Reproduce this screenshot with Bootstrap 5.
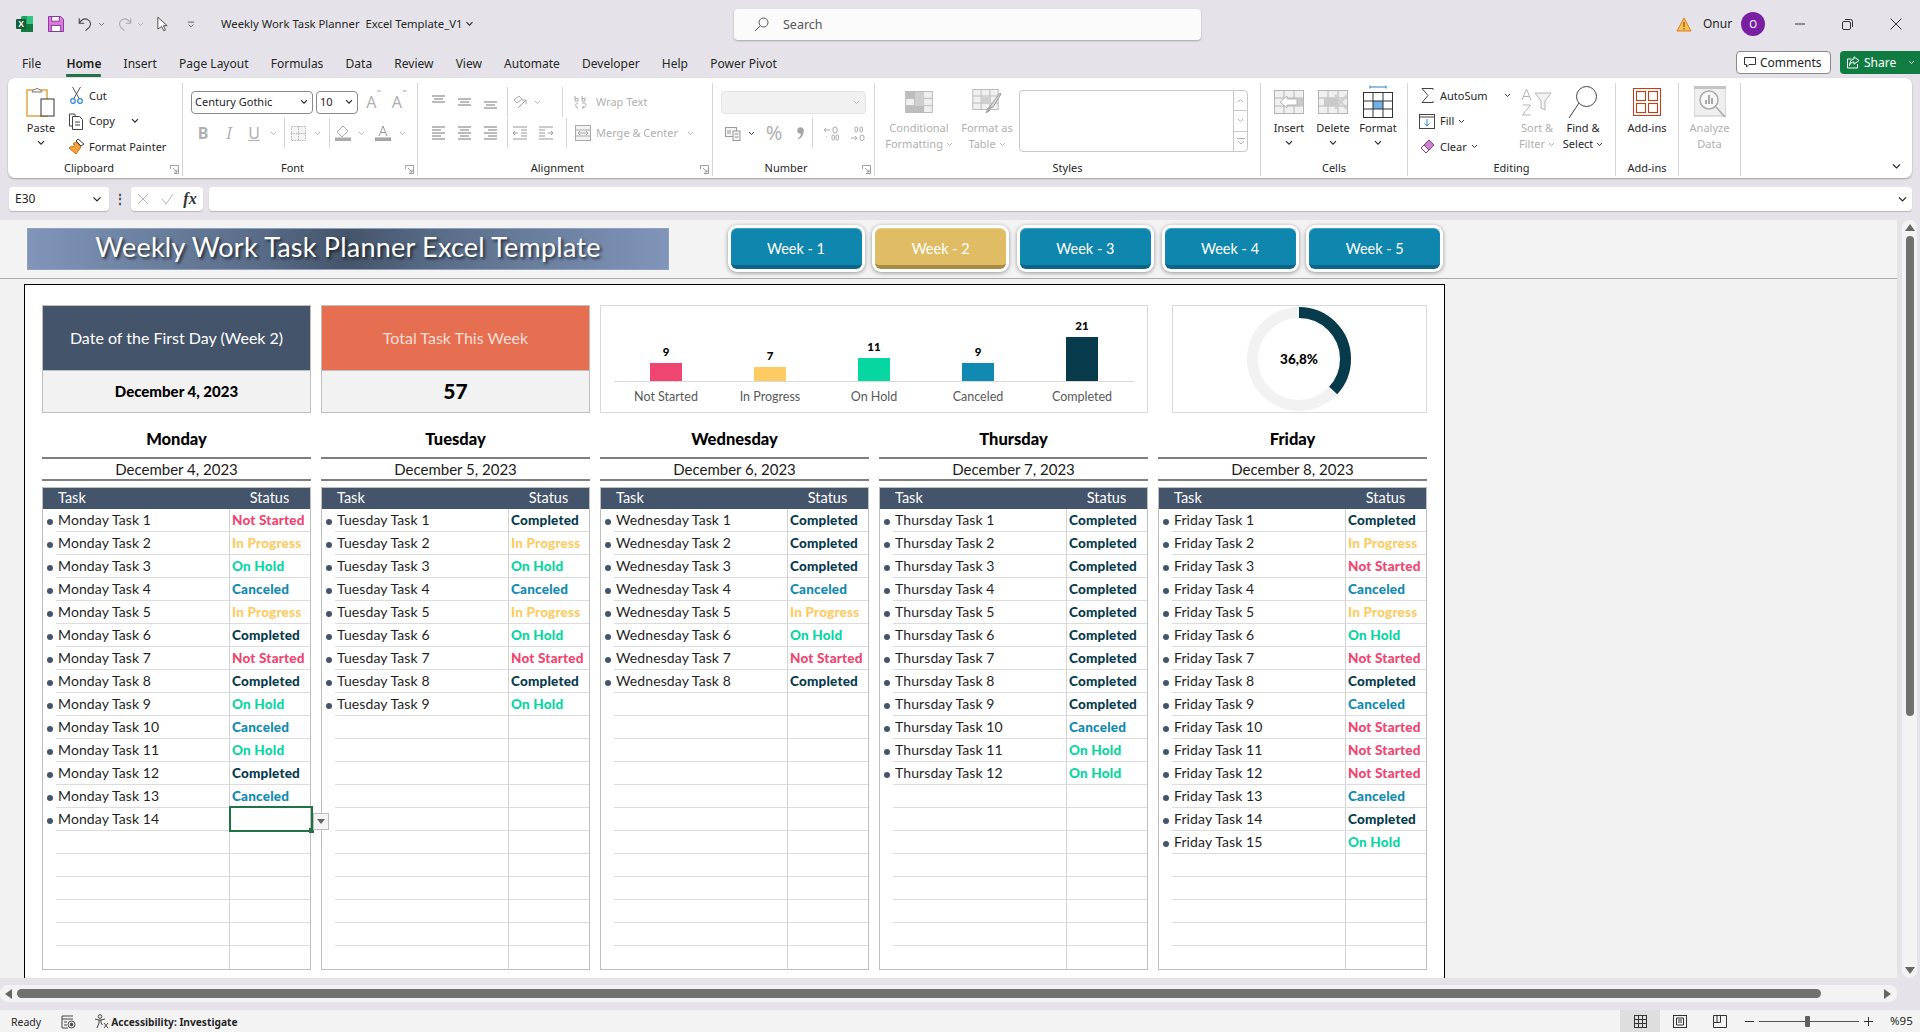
<!DOCTYPE html>
<html lang="en">
<head>
<meta charset="utf-8">
<title>Weekly Work Task Planner Excel Template</title>
<link href="https://cdn.jsdelivr.net/npm/bootstrap@5.3.0/dist/css/bootstrap.min.css" rel="stylesheet">
<style>
:root{--win:#e5e3e9;--ui:"Noto Sans","Open Sans",sans-serif;--cg:Lato,"Open Sans",sans-serif;--navy:#44546a;--ns:#ef4570;--ip:#fdcb62;--oh:#06d6a0;--ca:#118ab2;--co:#073b4c}
html,body{height:1032px;overflow:hidden}
body{background:var(--win);font-family:var(--ui);font-size:12px;color:#262626;line-height:16px}
svg{display:block;flex:none}
.appw{height:1032px;display:flex;flex-direction:column}
/* title bar */
.ttl{height:48px;flex:none;display:flex;align-items:center;position:relative}
.c{display:flex;align-items:center;justify-content:center;flex:none}
.m7{margin-left:7px}.m9{margin-left:9px}.m11{margin-left:11px}.m15{margin-left:15px}.m16{margin-left:16px}
.doc{margin-left:23px;font-size:11.3px;white-space:pre}
.srch{position:absolute;left:734px;top:9px;width:467px;height:31px;background:#fbfbfb;border-radius:4px;box-shadow:0 1px 2px rgba(0,0,0,.28);display:flex;align-items:center;padding-left:20px;gap:14px;color:#555;font-size:12.5px}
.onur{margin-left:11px}
.avt{width:24px;height:24px;border-radius:50%;background:#7a1fa2;color:#fff;font-size:10px;margin-left:9px}
.warnw{left:1676px}.ctrlw{left:1795px;gap:37px}
/* tabs */
.tabs{height:30px;flex:none;display:flex;align-items:center;padding:1px 0 0 22px;gap:22.2px;position:relative;font-size:12px}
.tabs>span{position:relative;white-space:nowrap}
.tabs .on{font-weight:600;color:#1d1d1d;margin-left:3px}
.tabs .on::after{content:"";position:absolute;left:0;right:0;top:18px;height:3px;background:#217346;border-radius:1px}
.acts{position:absolute;left:1736px;top:3px;display:flex;gap:9px}
.cmt,.shr{height:23px;border-radius:4px;display:flex;align-items:center;gap:4px}
.cmt{width:95px;background:#fff;border:1px solid #8a8a8a;padding-left:7px}
.shr{width:80px;background:#107c41;color:#fff;padding-left:7px;border-radius:4px 0 0 4px}
/* ribbon */
.ribn{height:100px;flex:none;margin:0 8px;background:#fff;border-radius:7px;box-shadow:0 1px 2px rgba(0,0,0,.3);display:flex;padding:5px 0 2px;position:relative;font-size:11px}
.grp{flex:none;height:93px;display:flex;flex-direction:column;border-right:1px solid #d5d5d5;position:relative}
.top{height:77px;flex:none;display:flex}
.lbl{height:16px;text-align:center;position:relative}
.g1{width:175px}.g2{width:235px}.g3{width:295px}.g4{width:162px}.g5{width:386px}.g6{width:147px}.g7{width:208px}.g8{width:63px}.g9{width:62px}
.g1 .lbl{padding-right:12px}.g2 .lbl,.g3 .lbl,.g4 .lbl{padding-right:15px}
.g1 .top{padding-left:7px}.g2 .top,.g3 .top,.g4 .top{padding-left:8px}
.g5 .top{padding-left:9px}.g6 .top{padding-left:6px}.g7 .top{padding-left:10px}
.lch{position:absolute;right:3px;top:5px;width:9px;height:9px}
.stk{display:flex;flex-direction:column}
.two{padding-top:8px;gap:9px}
.rw{display:flex;align-items:center;height:22px;flex:none}
.rw.tri-r{height:25.5px}
.big{display:flex;flex-direction:column;align-items:center;flex:none;text-align:center}
.big .pic{height:37px;display:flex;align-items:center;justify-content:center}
.cap svg{display:inline;vertical-align:1px}
.dim{color:#b0b0b0}
.vs{width:1px;height:30px;background:#d5d5d5;margin:0 3px;flex:none;align-self:center}
.w10{width:10px}.w12{width:12px}.w14{width:14px}.w16{width:16px}.w18{width:18px}.w20{width:20px}.w22{width:22px}.w24{width:24px}.w26{width:26px}.w27{width:27px}.w28{width:28px}.w30{width:30px}.w34{width:34px}
.b52{width:52px}.b70{width:70px}.b66{width:66px}.b44{width:44px}.b46{width:46px}.b40{width:40px}.b63{width:62px}.b61{width:61px}
.fsel{height:23px;border:1px solid #8a8a8a;border-radius:4px;display:flex;align-items:center;justify-content:space-between;padding:0 4px 0 3px;font-size:11px}
.fn{width:122px;margin-right:3px}.fz{width:42px}
.nsel{width:145px;height:23px;background:#f1f1f1;border:1px solid #e3e3e3;border-radius:4px;display:flex;align-items:center;justify-content:flex-end;padding-right:5px}
.glry{width:229px;height:62px;margin:7px 0 0 -1px;border:1px solid #c8c8c8;border-radius:4px;display:flex;justify-content:flex-end}
.gsc{width:14px;border-left:1px solid #c8c8c8;display:flex;flex-direction:column}
.gsc span{flex:1;display:flex;align-items:center;justify-content:center;border-bottom:1px solid #c8c8c8;color:#b0b0b0}
.gsc span:last-child{border:0}
.lc99{width:99px}
.clp{position:absolute;right:10px;bottom:8px}
.rotate180{transform:rotate(180deg)}
/* formula bar */
.fbar{height:24px;flex:none;margin:9px 8px 9px 9px;display:flex}
.fld{background:#fff;border-radius:4px;box-shadow:0 1px 1px rgba(0,0,0,.2);height:24px;display:flex;align-items:center}
.nmb{width:100px;justify-content:space-between;padding:0 7px 0 6px}
.dts{width:22px;justify-content:center;font-weight:700;color:#444}
.fxb{width:72px;color:#b5b5b5}
.fxb i{font-family:"Liberation Serif",serif;font-size:16px;color:#333;font-weight:700}
.inp{flex:1;margin-left:6px;justify-content:flex-end;padding-right:4px}
/* sheet */
.mn{flex:1;display:flex;min-height:0}
.sht{width:1897px;background:#f2f2f2;overflow:hidden;display:flex;flex-direction:column}
.band{height:59px;flex:none;border-bottom:1px solid #a9a9a9;display:flex;padding:8px 0 0 27px;background:#f3f3f3}
.bnr{width:642px;height:42px;background:linear-gradient(90deg,#8095b9,#5a6e8a 35%,#44546a 50%,#5a6e8a 65%,#8095b9);border:1px solid #8fa0bb;color:#fff;font-family:var(--cg);font-size:27px;letter-spacing:.22px;text-align:center;line-height:36px;text-shadow:2px 2px 3px rgba(0,0,0,.65)}
.wks{display:flex;gap:7.7px;margin:-3px 0 0 58.5px}
.wkb{width:137px;height:47px;background:#fff;border-radius:9px;padding:3px;box-shadow:0 1px 4px rgba(0,0,0,.4)}
.wkb span{display:block;height:41px;border-radius:6px;background:#0e86ae;border-bottom:4px solid #0a6587;color:#fff;font-family:var(--cg);font-size:14.5px;text-align:center;line-height:41px;box-shadow:inset 0 1px 1px rgba(255,255,255,.25)}
.wkb.act span{background:#e0bd64;border-bottom-color:#a98c43}
.pg{width:1421px;margin:5px 0 0 24px;background:#fff;border:1.5px solid #000;border-bottom:0;padding:19.5px 0 0 17px;flex:1;font-family:var(--cg)}
.gd{display:grid;grid-template-columns:repeat(5,269px);column-gap:10px}
.kpi{height:108px;border:1px solid #bfbfbf;display:flex;flex-direction:column;text-align:center}
.kh{height:65px;flex:none;color:#fff;font-size:16px;display:flex;align-items:center;justify-content:center;background:var(--navy);border-bottom:1px solid #bfbfbf}
.kh.org{background:#e76f51;color:#f9ded6}
.kb{flex:1;background:#f2f2f2;display:flex;align-items:center;justify-content:center;font-weight:900;font-size:15px;color:#000}
.kb.lg{font-size:21px}
.chrt{grid-column:3/5;height:108px;border:1px solid #d9d9d9;padding:0 13px}
.plot{height:76px;display:flex;align-items:flex-end;border-bottom:1px solid #d9d9d9}
.bcol{flex:1;display:flex;flex-direction:column;align-items:center}
.bcol b{font-size:11.5px;line-height:14px;margin-bottom:4px;color:#000;font-weight:900}
.bcol i{display:block;width:32px}
.bg-ns{background:var(--ns)}.bg-ip{background:var(--ip)}.bg-oh{background:var(--oh)}.bg-ca{background:var(--ca)}.bg-co{background:var(--co)}
.cats{display:flex;color:#595959;font-size:12.5px;line-height:30px}
.cats span{flex:1;text-align:center}
.dnt{height:108px;margin-left:14px;border:1px solid #d9d9d9;display:flex;align-items:center;justify-content:center}
.dnt svg{margin-left:-1px}
.dnt text{font-family:var(--cg);font-weight:900;font-size:13.5px}
.dy{text-align:center;font-weight:900;font-size:16.5px;color:#000;height:44px;line-height:52px}
.dt{border-top:2px solid #7f7f7f;border-bottom:2px solid #7f7f7f;height:24px;line-height:20px;text-align:center;font-size:15px;color:#1b1b1b}
.tsk{width:269px;margin-top:6px;border:1px solid #bfbfbf;border-collapse:separate;border-spacing:0;table-layout:fixed;font-size:14px}
.c1{width:13px}.c2{width:173px}.c3{width:81px}
.tsk th{height:21px;background:var(--navy);color:#fff;font-weight:400;font-size:14.5px;padding:0}
.tsk th:first-child{padding-left:15px}
.tsk th:last-child{text-align:center}
.tsk td{height:23px;padding:0 0 0 2px;border-bottom:1px solid #dcdcdc;color:#1f1f1f;white-space:nowrap;line-height:18px;letter-spacing:.1px}
.tsk td:first-child{border-bottom:0;padding:0;position:relative}
.tsk td:last-child{border-left:1px solid #d4d4d4;padding-left:2px;font-weight:900;letter-spacing:.2px;font-size:13.5px}
.tsk tr:last-child td{border-bottom:0}
.f td:first-child::before{content:"";position:absolute;left:4px;top:10px;width:6px;height:6px;border-radius:50%;background:var(--navy)}
.ns{color:var(--ns)!important}.ip{color:var(--ip)!important}.oh{color:var(--oh)!important}.ca{color:var(--ca)!important}.co{color:var(--co)!important}
.sel{position:relative}
.selb{position:absolute;left:-1px;top:-2px;width:84px;height:26px;border:2px solid #217346;pointer-events:none}
.selh{position:absolute;right:-3px;bottom:-3px;width:5px;height:5px;background:#217346;border:0}
.ddb{position:absolute;left:83px;top:5px;width:16px;height:17px;background:#f4f4f4;border:1px solid #bdbdbd;display:flex;align-items:center;justify-content:center}
.vsb{width:15px;margin-left:5px;background:#f3f3f3;border-radius:8px;display:flex;flex-direction:column;align-items:center;padding-top:4px;height:758px}
.vth{width:8px;height:480px;margin-top:5px;background:#707070;border-radius:4px}
.hsb{height:32px;flex:none;padding-top:7px}
.htr{width:1897px;height:17px;background:#f3f3f3;border-radius:8px;display:flex;align-items:center;padding:0 6px 0 5px}
.hth{width:1804px;height:9px;margin-left:5px;background:#707070;border-radius:5px}
.stb{height:22px;flex:none;background:#f4f3f4;display:flex;align-items:center;padding:1px 0 0 11px;font-size:10.5px;position:relative}
.stb b{font-weight:700;font-size:10.2px;margin-left:2px}
.vws{position:absolute;left:1620px;top:0;height:22px;display:flex;align-items:center}
.vws span{width:40px;height:22px;display:flex;align-items:center;justify-content:center}
.vws .hi{background:#dedede}
.zm{width:100px;height:1px;background:#555;position:relative;margin:0 3px}
.zm::after{content:"";position:absolute;left:46px;top:-5px;width:5px;height:11px;background:#5f5f5f;border-radius:1px}
.zw{position:absolute;left:1745px;top:0;height:22px;display:flex;align-items:center;gap:2px;font-size:11.5px}
.zw em{font-style:normal;margin-left:15px}
.m20{margin-left:20px}.m18{margin-left:18px}
</style>
</head>
<body>
<svg width="0" height="0" class="position-absolute">
<symbol id="chev" viewBox="0 0 8 6"><path d="M1 1.200l3 3 3-3" fill="none" stroke="currentColor" stroke-width="1.100"/></symbol>
<symbol id="at" viewBox="0 0 16 16"><path d="M1 2h13M3 5h9M1 8h13" fill="none" stroke="#777"/></symbol>
<symbol id="am" viewBox="0 0 16 16"><path d="M1 5h13M3 8h9M1 11h13" fill="none" stroke="#777"/></symbol>
<symbol id="ab" viewBox="0 0 16 16"><path d="M1 8h13M3 11h9M1 14h13" fill="none" stroke="#777"/></symbol>
<symbol id="al" viewBox="0 0 16 16"><path d="M1 2h13M1 5h9M1 8h13M1 11h9M1 14h13" fill="none" stroke="#777"/></symbol>
<symbol id="ac" viewBox="0 0 16 16"><path d="M1 2h13M3 5h9M1 8h13M3 11h9M1 14h13" fill="none" stroke="#777"/></symbol>
<symbol id="ar" viewBox="0 0 16 16"><path d="M1 2h13M5 5h9M1 8h13M5 11h9M1 14h13" fill="none" stroke="#777"/></symbol>
<symbol id="lnch" viewBox="0 0 9 9"><path d="M.5 4V.5h8v8H4M3 3l4 4M7 4.500V7H4.500" fill="none" stroke="#888" stroke-width=".8"/></symbol>
<symbol id="gr" viewBox="0 0 30 24"><rect x=".5" y=".5" width="29" height="23" fill="#f0f0f0" stroke="#b5b5b5"/><path d="M10 .5v23M20 .5v23M.5 8h29M.5 16h29" stroke="#b5b5b5" fill="none"/></symbol>
</svg>
<div class="appw">

<header class="ttl">
  <span class="c w16 m16"><svg width="17" height="18" viewBox="0 0 17 18"><rect x="5" y="1" width="12" height="16" rx="1.500" fill="#21a366"/><rect x="11" y="1" width="6" height="8" fill="#33c481"/><rect x="5" y="9" width="12" height="8" fill="#107c41"/><rect y="4" width="10" height="10" rx="1" fill="#185c37"/><text x="5" y="12" font-size="8.500" font-weight="700" fill="#fff" text-anchor="middle" font-family="Liberation Sans">X</text></svg></span>
  <span class="c w16 m16"><svg width="16" height="16" viewBox="0 0 17 17"><path d="M.5.5h13l3 3v13H.5z" fill="#d87dd9" stroke="#8b2e99"/><rect x="4" y=".5" width="8" height="5" fill="#fff" stroke="#8b2e99"/><rect x="3.500" y="10" width="10" height="6.500" fill="#fff" stroke="#8b2e99"/></svg></span>
  <span class="c w20 m11"><svg width="15" height="16" viewBox="0 0 18 18" fill="none" stroke="#444" stroke-width="1.300"><path d="M1.500 2v6h6"/><path d="M1.500 8C4 4 8 2 11.500 3.500c4 2 4.500 6.500 2 9.500L9 17"/></svg></span>
  <span class="c w12 text-secondary"><svg width="7" height="5"><use href="#chev"/></svg></span>
  <span class="c w20 m7"><svg width="15" height="16" viewBox="0 0 18 18" fill="none" stroke="#aaa" stroke-width="1.300"><path d="M16.500 2v6h-6"/><path d="M16.500 8C14 4 10 2 6.500 3.500c-4 2-4.500 6.500-2 9.500L9 17"/></svg></span>
  <span class="c w12 dim"><svg width="7" height="5"><use href="#chev"/></svg></span>
  <span class="c w14 m9"><svg width="11" height="16" viewBox="0 0 13 18"><path d="M1 1l11 10H7.500l2.500 5-2 1-2.500-5L1 15z" fill="#fff" stroke="#333"/></svg></span>
  <span class="c w14 m15"><svg width="8" height="7" viewBox="0 0 10 8" fill="none" stroke="#444"><path d="M1 1h8M2 4l3 3 3-3"/></svg></span>
  <span class="doc">Weekly Work Task Planner  Excel Template_V1</span>
  <span class="c w14"><svg width="9" height="6"><use href="#chev"/></svg></span>
  <div class="srch"><svg width="15" height="15" viewBox="0 0 15 15" fill="none" stroke="#555"><circle cx="9.500" cy="5.500" r="4.500"/><path d="M6 9l-5 5"/></svg>Search</div>
  <div class="position-absolute d-flex align-items-center top-0 h-100 warnw">
    <svg width="16" height="15" viewBox="0 0 16 15"><path d="M8 1l7 13H1z" fill="#f8c24e" stroke="#d97a2b"/><path d="M8 5v5M8 11v1.500" stroke="#6b3b00"/></svg>
    <span class="onur">Onur</span>
    <span class="c avt">O</span>
  </div>
  <div class="position-absolute d-flex align-items-center top-0 h-100 ctrlw">
    <svg width="10" height="2"><path d="M0 1h10" stroke="#333"/></svg>
    <svg width="11" height="11" viewBox="0 0 11 11" fill="none" stroke="#333"><rect x=".5" y="2.500" width="8" height="8" rx="1.500"/><path d="M3 .5h5.500a2 2 0 0 1 2 2V8"/></svg>
    <svg width="12" height="12" viewBox="0 0 12 12" stroke="#333"><path d="M.5.5l11 11M11.500.5l-11 11"/></svg>
  </div>
</header>

<nav class="tabs">
  <span>File</span><span class="on">Home</span><span>Insert</span><span>Page Layout</span><span>Formulas</span><span>Data</span><span>Review</span><span>View</span><span>Automate</span><span>Developer</span><span>Help</span><span>Power Pivot</span>
  <div class="acts">
    <div class="cmt"><svg width="12" height="11" viewBox="0 0 12 11" fill="none" stroke="#333"><path d="M.5.5h11v7H5l-2.500 2.500V7.500h-2z"/></svg>Comments</div>
    <div class="shr"><svg width="13" height="13" viewBox="0 0 13 13" fill="none" stroke="#fff"><path d="M10.500 8v4h-10V3h4M7 .8l5 3.700-5 3.700V6C4 6 3 8 2.500 9.500 3 6 4 3 7 3z"/></svg>Share<svg class="ms-2" width="7" height="5"><use href="#chev"/></svg></div>
  </div>
</nav>

<section class="ribn">
  <div class="grp g1"><div class="top">
    <div class="big b52"><div class="pic"><svg width="30" height="32" viewBox="0 0 30 32"><rect x="1" y="4" width="20" height="26" fill="#fff" stroke="#e8a33d" stroke-width="1.500"/><path d="M6 6c0-3 4-2 5-4 1 2 5 1 5 4z" fill="#f4f4f4" stroke="#777"/><rect x="15" y="13" width="13" height="17" fill="#fff" stroke="#333"/></svg></div>Paste<svg class="mt-1" width="8" height="6"><use href="#chev"/></svg></div>
    <div class="stk">
      <div class="rw tri-r"><span class="c w18"><svg width="13" height="17" viewBox="0 0 13 17" fill="none"><path d="M2.500 0l7 12M10.500 0l-7 12" stroke="#555"/><circle cx="3" cy="14" r="2.300" stroke="#2b88d8" stroke-width="1.200"/><circle cx="10" cy="14" r="2.300" stroke="#2b88d8" stroke-width="1.200"/></svg></span><span class="ms-1">Cut</span></div>
      <div class="rw tri-r"><span class="c w18"><svg width="15" height="17" viewBox="0 0 15 17" fill="#fff" stroke="#444"><path d="M6 3.500V1H.5v12H3"/><path d="M3.500 3.500h7l3 3v10h-10zM6 9h5M6 12h5"/></svg></span><span class="ms-1">Copy</span><span class="c ms-3"><svg width="8" height="6"><use href="#chev"/></svg></span></div>
      <div class="rw tri-r"><span class="c w18"><svg width="17" height="17" viewBox="0 0 17 17"><path d="M10 1l6 5-3 2-5-5z" fill="#fff" stroke="#444"/><path d="M8 4l5 5-5 7-7-6 3-2 1 1 2-2-2-1z" fill="#f2a33c" stroke="#c8751a"/></svg></span><span class="ms-1 text-nowrap">Format Painter</span></div>
    </div></div><div class="lbl">Clipboard<svg class="lch"><use href="#lnch"/></svg></div></div>

  <div class="grp g2"><div class="top stk two">
    <div class="rw"><div class="fsel fn">Century Gothic<svg width="8" height="6"><use href="#chev"/></svg></div><div class="fsel fz">10<svg width="8" height="6"><use href="#chev"/></svg></div><span class="c w24 ms-1 dim fs-6">A<sup>&#710;</sup></span><span class="c w27 dim fs-6">A<sup>&#711;</sup></span></div>
    <div class="rw dim"><b class="c w24 fs-6">B</b><i class="c w28 fs-6">I</i><u class="c w22 fs-6">U</u><span class="c w16"><svg width="7" height="5"><use href="#chev"/></svg></span><span class="vs"></span><span class="c w20"><svg width="15" height="15" viewBox="0 0 15 15" fill="#f4f4f4" stroke="#b5b5b5" stroke-dasharray="1.500 1"><rect x=".5" y=".5" width="14" height="14"/><path d="M7.500 0v15M0 7.500h15"/></svg></span><span class="c w18"><svg width="7" height="5"><use href="#chev"/></svg></span><span class="vs"></span><span class="c w20"><svg width="16" height="16" viewBox="0 0 16 16" fill="none" stroke="#aaa"><path d="M8 1L2 7l5 5 6-6z"/><rect x="0" y="13" width="16" height="3" fill="#aaa"/></svg></span><span class="c w16"><svg width="7" height="5"><use href="#chev"/></svg></span><span class="c w28"><svg width="16" height="16" viewBox="0 0 16 16" fill="none" stroke="#999"><path d="M4 11L8 1l4 10M5.500 7.500h5"/><rect x="0" y="13" width="16" height="3" fill="#aaa"/></svg></span><span class="c w10"><svg width="7" height="5"><use href="#chev"/></svg></span></div>
    </div><div class="lbl">Font<svg class="lch"><use href="#lnch"/></svg></div></div>

  <div class="grp g3"><div class="top stk two">
    <div class="rw dim"><span class="c w26"><svg width="16" height="16"><use href="#at"/></svg></span><span class="c w26"><svg width="16" height="16"><use href="#am"/></svg></span><span class="c w26"><svg width="16" height="16"><use href="#ab"/></svg></span><span class="vs"></span><span class="c w18"><svg width="16" height="16" viewBox="0 0 16 16" fill="none" stroke="#aaa"><path d="M2 6l5-4 3 3-5 4zM6 14l8-8M10 6h4v4"/></svg></span><span class="c w16"><svg width="7" height="5"><use href="#chev"/></svg></span><span class="w14"></span><span class="vs"></span><span class="c w30"><svg width="14" height="14" viewBox="0 0 14 14" fill="none" stroke="#aaa"><path d="M1 6V1M1 3.500h3v2.500H1M8 1v5h3V3.500H8M4 13c-3 0-3-5 0-5M8 8h3c2 2 0 5-3 5l2-2"/></svg></span>Wrap Text</div>
    <div class="rw dim"><span class="c w26"><svg width="16" height="16"><use href="#al"/></svg></span><span class="c w26"><svg width="16" height="16"><use href="#ac"/></svg></span><span class="c w26"><svg width="16" height="16"><use href="#ar"/></svg></span><span class="vs"></span><span class="c w18"><svg width="16" height="16" viewBox="0 0 16 16" fill="none" stroke="#999"><path d="M1 2h14M9 5h6M9 8h6M9 11h6M1 14h14M6 8H1M3 6L1 8l2 2"/></svg></span><span class="c w34"><svg width="16" height="16" viewBox="0 0 16 16" fill="none" stroke="#999"><path d="M1 2h14M1 5h6M1 8h6M1 11h6M1 14h14M10 8h5M13 6l2 2-2 2"/></svg></span><span class="vs"></span><span class="c w26"><svg width="16" height="16" viewBox="0 0 16 16" fill="#f2f2f2" stroke="#aaa"><rect x=".5" y=".5" width="15" height="15"/><path d="M.5 5h15M.5 11h15M3 8h10M5 6L3 8l2 2M11 6l2 2-2 2"/></svg></span>Merge &amp; Center<span class="c w24"><svg width="7" height="5"><use href="#chev"/></svg></span></div>
    </div><div class="lbl">Alignment<svg class="lch"><use href="#lnch"/></svg></div></div>

  <div class="grp g4"><div class="top stk two">
    <div class="rw"><div class="nsel dim"><svg width="7" height="5"><use href="#chev"/></svg></div></div>
    <div class="rw"><span class="c w24"><svg width="16" height="15" viewBox="0 0 16 15" fill="#f5f5f5" stroke="#999"><rect x=".5" y="1.500" width="11" height="9"/><rect x="8" y="5" width="7" height="9.500"/><path d="M9.500 8h4M9.500 11h4M3 4v4M5 4v4"/></svg></span><span class="c w12"><svg width="7" height="5"><use href="#chev"/></svg></span><span class="c w34 dim fs-5">%</span><span class="c w18"><svg width="7" height="13" viewBox="0 0 7 13"><circle cx="3.500" cy="3.500" r="3.200" fill="#a5a5a5"/><path d="M6.700 3.500C6.700 8 4.500 11 1.500 12.500L1 11.500C3 10 4 8 4 6z" fill="#a5a5a5"/></svg></span><span class="vs"></span><span class="c w30"><svg width="16" height="16" viewBox="0 0 16 16" fill="none" stroke="#aaa"><path d="M1 5h6M3 3L1 5l2 2"/><rect x="10" y="2" width="4" height="6" rx="2"/><rect x="9" y="10" width="2.500" height="5" rx="1.200"/><rect x="13" y="10" width="2.500" height="5" rx="1.200"/><path d="M3 12h1"/></svg></span><span class="c w22"><svg width="16" height="16" viewBox="0 0 16 16" fill="none" stroke="#aaa"><rect x="6" y="2" width="2.500" height="5" rx="1.200"/><rect x="11" y="2" width="2.500" height="5" rx="1.200"/><path d="M2 13h6M6 11l2 2-2 2"/><rect x="11" y="10" width="4" height="5.500" rx="2"/></svg></span></div>
    </div><div class="lbl">Number<svg class="lch"><use href="#lnch"/></svg></div></div>

  <div class="grp g5"><div class="top">
    <div class="big b70 dim"><div class="pic"><svg width="28" height="22" viewBox="0 0 28 22"><use href="#gr" width="28" height="22"/><rect x="1" y="1" width="9" height="7" fill="#bdbdbd"/><rect x="10" y="1" width="9" height="14" fill="#cfcfcf"/><rect x="1" y="15" width="18" height="6" fill="#bdbdbd"/></svg></div><span class="cap">Conditional<br>Formatting <svg width="7" height="5"><use href="#chev"/></svg></span></div>
    <div class="big b66 dim"><div class="pic"><svg width="30" height="26" viewBox="0 0 30 26"><use href="#gr" width="27" height="21"/><rect x="10" y="8" width="9" height="7" fill="#cfcfcf"/><path d="M28 4l-9 12-2 3 4-1 8-13z" fill="#ddd" stroke="#999"/><path d="M13 24c3 0 6-2 6-5l-2-1c-3 1-2 5-4 6z" fill="#aaa"/></svg></div><span class="cap">Format as<br>Table <svg width="7" height="5"><use href="#chev"/></svg></span></div>
    <div class="glry"><div class="gsc"><span><svg class="rotate180" width="7" height="5"><use href="#chev"/></svg></span><span><svg width="7" height="5"><use href="#chev"/></svg></span><span><svg width="8" height="7" viewBox="0 0 8 7" fill="none" stroke="#b0b0b0"><path d="M0 .5h8M1 3l3 3 3-3"/></svg></span></div></div>
    </div><div class="lbl">Styles</div></div>

  <div class="grp g6"><div class="top">
    <div class="big b44"><div class="pic"><svg width="30" height="24" viewBox="0 0 30 24"><use href="#gr"/><rect x="12" y="8" width="17" height="8" fill="#c9c9c9"/><path d="M13 6L6 12l7 6v-3h10V9H13z" fill="#fff" stroke="#b5b5b5"/></svg></div>Insert<svg class="mt-1" width="8" height="6"><use href="#chev"/></svg></div>
    <div class="big b44"><div class="pic"><svg width="30" height="24" viewBox="0 0 30 24"><use href="#gr"/><rect x="6" y="8" width="14" height="8" fill="#c9c9c9"/><path d="M17 5l12 14M29 5L17 19" stroke="#d0d0d0" stroke-width="2.500"/></svg></div>Delete<svg class="mt-1" width="8" height="6"><use href="#chev"/></svg></div>
    <div class="big b46"><div class="pic"><svg width="30" height="33" viewBox="0 0 30 33"><path d="M7 2h16M7 .5v3M23 .5v3" stroke="#2b7fb8"/><rect x=".5" y="7.500" width="29" height="25" fill="#fff" stroke="#333"/><rect x="10" y="16" width="10" height="8" fill="#70b1ea"/><path d="M10 7.500v25M20 7.500v25M.5 16h29M.5 24h29" stroke="#333" fill="none"/></svg></div>Format<svg class="mt-1" width="8" height="6"><use href="#chev"/></svg></div>
    </div><div class="lbl">Cells</div></div>

  <div class="grp g7"><div class="top">
    <div class="stk lc99">
      <div class="rw tri-r"><span class="c w18"><svg width="13" height="15" viewBox="0 0 13 15" fill="none" stroke="#444"><path d="M12 2V.5H1L7 7.500 1 14.500h11V13"/></svg></span><span class="ms-1">AutoSum</span><span class="c ms-3"><svg width="7" height="5"><use href="#chev"/></svg></span></div>
      <div class="rw tri-r"><span class="c w18"><svg width="16" height="15" viewBox="0 0 16 15" fill="#fff" stroke="#444"><rect x=".5" y=".5" width="15" height="14"/><path d="M.5 3h15"/><path d="M8 5v7M5.500 9.500L8 12l2.500-2.500" stroke="#2b88d8" fill="none"/></svg></span><span class="ms-1">Fill</span><span class="c ms-1"><svg width="7" height="5"><use href="#chev"/></svg></span></div>
      <div class="rw tri-r"><span class="c w18"><svg width="16" height="15" viewBox="0 0 16 15"><path d="M10 1l5 5-8 8-5-5z" fill="#c986cb" stroke="#8b2e99"/><path d="M7 14L2 9l3-3 5 5z" fill="#fff" stroke="#8b2e99"/></svg></span><span class="ms-1">Clear</span><span class="c ms-1"><svg width="7" height="5"><use href="#chev"/></svg></span></div>
    </div>
    <div class="big b40 dim"><div class="pic"><svg width="32" height="30" viewBox="0 0 32 30" fill="none" stroke="#b5b5b5"><path d="M1 13L5.500 2 10 13M2.500 9.500h6M1.500 18h8L1.500 28h8"/><path d="M14 6h16l-6 8v9l-4-2v-7z" fill="#f3f3f3"/></svg></div><span class="cap">Sort &amp;<br>Filter <svg width="7" height="5"><use href="#chev"/></svg></span></div>
    <div class="big b52"><div class="pic"><svg width="30" height="34" viewBox="0 0 30 34" fill="none" stroke="#444"><circle cx="18.500" cy="11.500" r="10"/><path d="M11 18L1 33"/></svg></div><span class="cap">Find &amp;<br>Select <svg width="7" height="5"><use href="#chev"/></svg></span></div>
    </div><div class="lbl">Editing</div></div>

  <div class="grp g8"><div class="top"><div class="big b63"><div class="pic"><svg width="28" height="28" viewBox="0 0 28 28" fill="none" stroke="#c43e1c" stroke-width="1.100"><rect x=".5" y=".5" width="27" height="27"/><rect x="3.500" y="3.500" width="9" height="9"/><rect x="15.500" y="3.500" width="9" height="9"/><rect x="3.500" y="15.500" width="9" height="9"/><rect x="15.500" y="15.500" width="9" height="9"/></svg></div>Add-ins</div></div><div class="lbl">Add-ins</div></div>

  <div class="grp g9"><div class="top"><div class="big b61 dim"><div class="pic"><svg width="32" height="32" viewBox="0 0 32 32"><rect width="32" height="30" fill="#efefef" stroke="#c4c4c4"/><rect width="32" height="3" fill="#c4c4c4"/><circle cx="15" cy="14" r="9" fill="#f7f7f7" stroke="#aaa" stroke-width="1.500"/><path d="M11 18v-4h2v4zM14 18V9h2v9zM17 18v-6h2v6z" fill="#aaa"/><path d="M22 21l9 10" stroke="#aaa" stroke-width="1.500"/></svg></div><span class="cap">Analyze<br>Data</span></div></div></div>
  <div class="clp"><svg width="11" height="7"><use href="#chev"/></svg></div>
</section>

<div class="fbar">
  <div class="fld nmb">E30<svg width="10" height="7"><use href="#chev"/></svg></div>
  <div class="c dts">&#8942;</div>
  <div class="fld fxb"><span class="c w24"><svg width="12" height="12" stroke="#b5b5b5" fill="none"><path d="M1 1l10 10M11 1L1 11"/></svg></span><span class="c w24"><svg width="13" height="12" stroke="#b5b5b5" fill="none"><path d="M1 6l4 5 7-10"/></svg></span><i class="c w22">fx</i></div>
  <div class="fld inp"><svg width="11" height="7"><use href="#chev"/></svg></div>
</div>

<main class="mn">
<div class="sht">
  <div class="band">
    <div class="bnr">Weekly Work Task Planner Excel Template</div>
    <div class="wks">
      <div class="wkb"><span>Week - 1</span></div><div class="wkb act"><span>Week - 2</span></div><div class="wkb"><span>Week - 3</span></div><div class="wkb"><span>Week - 4</span></div><div class="wkb"><span>Week - 5</span></div>
    </div>
  </div>
  <div class="pg">
    <div class="gd">
      <div class="kpi"><div class="kh">Date of the First Day (Week 2)</div><div class="kb">December 4, 2023</div></div>
      <div class="kpi"><div class="kh org">Total Task This Week</div><div class="kb lg">57</div></div>
      <div class="chrt">
        <div class="plot">
          <div class="bcol"><b>9</b><i class="bg-ns" style="height:18px"></i></div>
          <div class="bcol"><b>7</b><i class="bg-ip" style="height:14px"></i></div>
          <div class="bcol"><b>11</b><i class="bg-oh" style="height:23px"></i></div>
          <div class="bcol"><b>9</b><i class="bg-ca" style="height:18px"></i></div>
          <div class="bcol"><b>21</b><i class="bg-co" style="height:44px"></i></div>
        </div>
        <div class="cats"><span>Not Started</span><span>In Progress</span><span>On Hold</span><span>Canceled</span><span>Completed</span></div>
      </div>
      <div class="dnt"><svg width="106" height="106" viewBox="0 0 106 106"><circle cx="53" cy="53" r="46.500" fill="none" stroke="#f2f2f2" stroke-width="11"/><circle cx="53" cy="53" r="46.500" fill="none" stroke="#073b4c" stroke-width="11" stroke-dasharray="107.500 292.200" transform="rotate(-90 53 53)"/><text x="53" y="58" text-anchor="middle">36,8%</text></svg></div>
    </div>
    <div class="gd">
      <div><div class="dy">Monday</div><div class="dt">December 4, 2023</div>
      <table class="tsk"><colgroup><col class="c1"><col class="c2"><col class="c3"></colgroup><tr><th colspan="2">Task<th>Status
<tr class="f"><td><td>Monday Task 1<td class="ns">Not Started
<tr class="f"><td><td>Monday Task 2<td class="ip">In Progress
<tr class="f"><td><td>Monday Task 3<td class="oh">On Hold
<tr class="f"><td><td>Monday Task 4<td class="ca">Canceled
<tr class="f"><td><td>Monday Task 5<td class="ip">In Progress
<tr class="f"><td><td>Monday Task 6<td class="co">Completed
<tr class="f"><td><td>Monday Task 7<td class="ns">Not Started
<tr class="f"><td><td>Monday Task 8<td class="co">Completed
<tr class="f"><td><td>Monday Task 9<td class="oh">On Hold
<tr class="f"><td><td>Monday Task 10<td class="ca">Canceled
<tr class="f"><td><td>Monday Task 11<td class="oh">On Hold
<tr class="f"><td><td>Monday Task 12<td class="co">Completed
<tr class="f"><td><td>Monday Task 13<td class="ca">Canceled
<tr class="f"><td><td>Monday Task 14<td class="sel"><span class="selb"><span class="selh"></span></span><span class="ddb"><svg width="8" height="5" viewBox="0 0 8 5"><path d="M0 0h8L4 5z" fill="#666"/></svg></span>
<tr><td><td><td><tr><td><td><td><tr><td><td><td><tr><td><td><td><tr><td><td><td><tr><td><td><td></table></div>
      <div><div class="dy">Tuesday</div><div class="dt">December 5, 2023</div>
      <table class="tsk"><colgroup><col class="c1"><col class="c2"><col class="c3"></colgroup><tr><th colspan="2">Task<th>Status
<tr class="f"><td><td>Tuesday Task 1<td class="co">Completed
<tr class="f"><td><td>Tuesday Task 2<td class="ip">In Progress
<tr class="f"><td><td>Tuesday Task 3<td class="oh">On Hold
<tr class="f"><td><td>Tuesday Task 4<td class="ca">Canceled
<tr class="f"><td><td>Tuesday Task 5<td class="ip">In Progress
<tr class="f"><td><td>Tuesday Task 6<td class="oh">On Hold
<tr class="f"><td><td>Tuesday Task 7<td class="ns">Not Started
<tr class="f"><td><td>Tuesday Task 8<td class="co">Completed
<tr class="f"><td><td>Tuesday Task 9<td class="oh">On Hold
<tr><td><td><td><tr><td><td><td><tr><td><td><td><tr><td><td><td><tr><td><td><td><tr><td><td><td><tr><td><td><td><tr><td><td><td><tr><td><td><td><tr><td><td><td><tr><td><td><td></table></div>
      <div><div class="dy">Wednesday</div><div class="dt">December 6, 2023</div>
      <table class="tsk"><colgroup><col class="c1"><col class="c2"><col class="c3"></colgroup><tr><th colspan="2">Task<th>Status
<tr class="f"><td><td>Wednesday Task 1<td class="co">Completed
<tr class="f"><td><td>Wednesday Task 2<td class="co">Completed
<tr class="f"><td><td>Wednesday Task 3<td class="co">Completed
<tr class="f"><td><td>Wednesday Task 4<td class="ca">Canceled
<tr class="f"><td><td>Wednesday Task 5<td class="ip">In Progress
<tr class="f"><td><td>Wednesday Task 6<td class="oh">On Hold
<tr class="f"><td><td>Wednesday Task 7<td class="ns">Not Started
<tr class="f"><td><td>Wednesday Task 8<td class="co">Completed
<tr><td><td><td><tr><td><td><td><tr><td><td><td><tr><td><td><td><tr><td><td><td><tr><td><td><td><tr><td><td><td><tr><td><td><td><tr><td><td><td><tr><td><td><td><tr><td><td><td><tr><td><td><td></table></div>
      <div><div class="dy">Thursday</div><div class="dt">December 7, 2023</div>
      <table class="tsk"><colgroup><col class="c1"><col class="c2"><col class="c3"></colgroup><tr><th colspan="2">Task<th>Status
<tr class="f"><td><td>Thursday Task 1<td class="co">Completed
<tr class="f"><td><td>Thursday Task 2<td class="co">Completed
<tr class="f"><td><td>Thursday Task 3<td class="co">Completed
<tr class="f"><td><td>Thursday Task 4<td class="co">Completed
<tr class="f"><td><td>Thursday Task 5<td class="co">Completed
<tr class="f"><td><td>Thursday Task 6<td class="co">Completed
<tr class="f"><td><td>Thursday Task 7<td class="co">Completed
<tr class="f"><td><td>Thursday Task 8<td class="co">Completed
<tr class="f"><td><td>Thursday Task 9<td class="co">Completed
<tr class="f"><td><td>Thursday Task 10<td class="ca">Canceled
<tr class="f"><td><td>Thursday Task 11<td class="oh">On Hold
<tr class="f"><td><td>Thursday Task 12<td class="oh">On Hold
<tr><td><td><td><tr><td><td><td><tr><td><td><td><tr><td><td><td><tr><td><td><td><tr><td><td><td><tr><td><td><td><tr><td><td><td></table></div>
      <div><div class="dy">Friday</div><div class="dt">December 8, 2023</div>
      <table class="tsk"><colgroup><col class="c1"><col class="c2"><col class="c3"></colgroup><tr><th colspan="2">Task<th>Status
<tr class="f"><td><td>Friday Task 1<td class="co">Completed
<tr class="f"><td><td>Friday Task 2<td class="ip">In Progress
<tr class="f"><td><td>Friday Task 3<td class="ns">Not Started
<tr class="f"><td><td>Friday Task 4<td class="ca">Canceled
<tr class="f"><td><td>Friday Task 5<td class="ip">In Progress
<tr class="f"><td><td>Friday Task 6<td class="oh">On Hold
<tr class="f"><td><td>Friday Task 7<td class="ns">Not Started
<tr class="f"><td><td>Friday Task 8<td class="co">Completed
<tr class="f"><td><td>Friday Task 9<td class="ca">Canceled
<tr class="f"><td><td>Friday Task 10<td class="ns">Not Started
<tr class="f"><td><td>Friday Task 11<td class="ns">Not Started
<tr class="f"><td><td>Friday Task 12<td class="ns">Not Started
<tr class="f"><td><td>Friday Task 13<td class="ca">Canceled
<tr class="f"><td><td>Friday Task 14<td class="co">Completed
<tr class="f"><td><td>Friday Task 15<td class="oh">On Hold
<tr><td><td><td><tr><td><td><td><tr><td><td><td><tr><td><td><td><tr><td><td><td></table></div>
    </div>
  </div>
</div>
<div class="vsb"><svg width="10" height="7" viewBox="0 0 10 7"><path d="M5 0l5 7H0z" fill="#666"/></svg><div class="vth"></div><svg class="mt-auto mb-1" width="10" height="7" viewBox="0 0 10 7"><path d="M0 0h10L5 7z" fill="#666"/></svg></div>
</main>

<div class="hsb"><div class="htr"><svg width="7" height="10" viewBox="0 0 7 10"><path d="M7 0v10L0 5z" fill="#666"/></svg><div class="hth"></div><svg class="ms-auto" width="7" height="10" viewBox="0 0 7 10"><path d="M0 0l7 5-7 5z" fill="#666"/></svg></div></div>

<footer class="stb">
  <span>Ready</span>
  <svg class="m20" width="15" height="14" viewBox="0 0 15 14" fill="none" stroke="#444"><path d="M12 1H1v12h6M1 4h11M3 7h3M3 10h3"/><circle cx="10.500" cy="9.500" r="3.500"/><circle cx="10.500" cy="9.500" r="1.300" fill="#444"/></svg>
  <svg class="m18" width="15" height="15" viewBox="0 0 15 15" fill="none" stroke="#444"><circle cx="6" cy="2.500" r="1.800"/><path d="M1 5l4 1h2l4-1M5 6v3l-2 5M7 6v3l1.500 2M10 9l4 5M14 9l-4 5"/></svg>
  <b>Accessibility: Investigate</b>
  <div class="vws">
    <span class="hi"><svg width="13" height="13" viewBox="0 0 13 13" fill="none" stroke="#333"><rect x=".5" y=".5" width="12" height="12"/><path d="M4.500 0v13M8.500 0v13M0 4.500h13M0 8.500h13"/></svg></span>
    <span><svg width="14" height="13" viewBox="0 0 14 13" fill="none" stroke="#333"><rect x=".5" y=".5" width="13" height="12"/><path d="M3.500 3h7v7h-7zM5 5h4M5 7h4"/></svg></span>
    <span><svg width="14" height="13" viewBox="0 0 14 13" fill="none" stroke="#333"><path d="M.5 .5h13v12H.5zM.5 7.500h7V.5M4 .5v7"/></svg></span>
  </div>
  <div class="zw">
    <svg width="9" height="1"><path d="M0 .5h9" stroke="#333"/></svg><span class="zm"></span><svg width="9" height="9"><path d="M0 4.500h9M4.500 0v9" stroke="#333"/></svg><em>%95</em>
  </div>
</footer>
</div>
</body>
</html>
